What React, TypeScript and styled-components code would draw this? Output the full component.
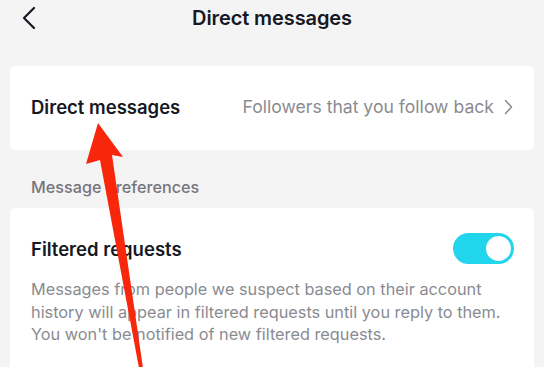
import React from "react";
import styled, { createGlobalStyle } from "styled-components";

const GlobalStyle = createGlobalStyle`
  html, body {
    margin: 0;
    padding: 0;
    background: #f4f4f4;
  }
  body {
    font-family: "Inter", "Noto Sans", sans-serif;
    -webkit-font-smoothing: antialiased;
  }
`;

const Page = styled.div`
  position: relative;
  width: 544px;
  height: 367px;
  overflow: hidden;
  background: #f4f4f4;
  color: #161823;
`;

const Header = styled.div`
  height: 36px;
  display: flex;
  align-items: center;
  justify-content: center;
  position: relative;
`;

const BackButton = styled.button`
  position: absolute;
  left: 18px;
  top: 5px;
  width: 22px;
  height: 26px;
  padding: 0;
  border: none;
  background: none;
  display: flex;
  align-items: center;
  justify-content: center;
`;

const Title = styled.h1`
  margin: 0;
  font-size: 20px;
  font-weight: 600;
  letter-spacing: -0.1px;
`;

const Content = styled.div`
  padding: 30px 10px 0;
  display: flex;
  flex-direction: column;
`;

const Card = styled.div`
  background: #fff;
  border-radius: 5px;
`;

const Row = styled.div`
  height: 81px;
  padding: 0 21px 3px;
  display: flex;
  align-items: center;
  justify-content: space-between;
`;

const RowLabel = styled.span`
  font-size: 18.5px;
  font-weight: 600;
`;

const RowValue = styled.span`
  display: flex;
  align-items: center;
  gap: 10px;
  font-size: 17.6px;
  color: #8a8b91;
`;

const SectionLabel = styled.div`
  padding: 27px 21px 11px;
  font-size: 16.2px;
  font-weight: 500;
  color: #75767c;
`;

const ToggleBlock = styled.div`
  padding: 25px 21px 30px;
`;

const ToggleHead = styled.div`
  display: flex;
  align-items: center;
  justify-content: space-between;
  margin-bottom: 14px;
`;

const Toggle = styled.div<{ $on: boolean }>`
  width: 61px;
  height: 31px;
  border-radius: 16px;
  background: ${(p) => (p.$on ? "#20d5ec" : "#e3e3e4")};
  position: relative;
  margin-right: -1px;
  &::after {
    content: "";
    position: absolute;
    top: 3px;
    left: ${(p) => (p.$on ? "33px" : "3px")};
    width: 25px;
    height: 25px;
    border-radius: 50%;
    background: #fff;
  }
`;

const Description = styled.p`
  margin: 0;
  font-size: 16.3px;
  line-height: 22.5px;
  color: #8a8b91;
`;

const Arrow = styled.svg`
  position: absolute;
  left: 0;
  top: 0;
  pointer-events: none;
`;

export default function App() {
  return (
    <Page>
      <GlobalStyle />
      <Header>
        <BackButton aria-label="Back">
          <svg width="14" height="24" viewBox="0 0 14 24">
            <path
              d="M12 2 L2 12 L12 22"
              fill="none"
              stroke="#161823"
              strokeWidth="2.2"
              strokeLinecap="round"
              strokeLinejoin="round"
            />
          </svg>
        </BackButton>
        <Title>Direct messages</Title>
      </Header>
      <Content>
        <Card>
          <Row>
            <RowLabel>Direct messages</RowLabel>
            <RowValue>
              Followers that you follow back
              <svg width="9" height="16" viewBox="0 0 9 16">
                <path
                  d="M1.5 1.5 L7.5 8 L1.5 14.5"
                  fill="none"
                  stroke="#8a8b91"
                  strokeWidth="1.5"
                  strokeLinecap="round"
                  strokeLinejoin="round"
                />
              </svg>
            </RowValue>
          </Row>
        </Card>
        <SectionLabel>Message preferences</SectionLabel>
        <Card>
          <ToggleBlock>
            <ToggleHead>
              <RowLabel>Filtered requests</RowLabel>
              <Toggle $on />
            </ToggleHead>
            <Description>
              Messages from people we suspect based on their account
              <br />
              history will appear in filtered requests until you reply to them.
              <br />
              You won't be notified of new filtered requests.
            </Description>
          </ToggleBlock>
        </Card>
      </Content>
      <Arrow width="544" height="367" viewBox="0 0 544 367">
        <polygon
          points="98,123 123,157 112,155 143,368 139,368 100,160 86,164"
          fill="#f8260a"
        />
      </Arrow>
    </Page>
  );
}
